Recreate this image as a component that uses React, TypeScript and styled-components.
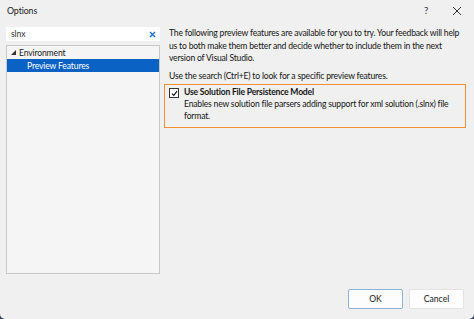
import React from "react";
import styled, { createGlobalStyle } from "styled-components";

const Global = createGlobalStyle`
  html, body { margin: 0; padding: 0; }
  body {
    width: 474px;
    height: 319px;
    overflow: hidden;
    background: #34405e;
    font-family: "Lato", "Noto Sans", sans-serif;
    color: #1a1a1a;
  }
`;

const Dialog = styled.div`
  width: 474px;
  height: 319px;
  display: flex;
  flex-direction: column;
  background: #f0f0f0;
  border-radius: 0 0 5px 5px;
  box-sizing: border-box;
`;

const TitleBar = styled.div`
  height: 21px;
  display: flex;
  align-items: center;
  padding: 0 0 0 7px;
  font-size: 8.8px;
  letter-spacing: -0.1px;
`;

const Title = styled.div`
  flex: 1;
  color: #202020;
`;

const TitleButton = styled.div<{ $w: number }>`
  width: ${(p) => p.$w}px;
  height: 21px;
  display: flex;
  align-items: center;
  justify-content: center;
  color: #333;
  font-size: 9.5px;
`;

const Body = styled.div`
  height: 253px;
  display: flex;
  padding: 6px 8px 0 6px;
  gap: 4px;
  box-sizing: border-box;
`;

const LeftPane = styled.div`
  width: 154px;
  display: flex;
  flex-direction: column;
  gap: 4px;
`;

const Search = styled.div`
  height: 14px;
  background: #fff;
  display: flex;
  align-items: center;
  padding: 0 4px 0 5px;
  font-size: 8.6px;
  letter-spacing: -0.1px;
  color: #333;
`;

const SearchText = styled.div`
  flex: 1;
`;

const Tree = styled.div`
  flex: 1;
  border: 1px solid #c8c8c8;
  background: #f5f5f5;
  font-size: 8.6px;
  letter-spacing: -0.15px;
`;

const TreeRow = styled.div<{ $selected?: boolean; $indent: number }>`
  height: 13px;
  display: flex;
  align-items: center;
  padding-left: ${(p) => p.$indent}px;
  background: ${(p) => (p.$selected ? "#0a62c4" : "transparent")};
  color: ${(p) => (p.$selected ? "#fff" : "#1a1a1a")};
  gap: 3px;
`;

const RightPane = styled.div`
  flex: 1;
  display: flex;
  flex-direction: column;
`;

const Para = styled.p<{ $gap: number }>`
  margin: 0 0 ${(p) => p.$gap}px 5px;
  font-size: 8.6px;
  line-height: 12.5px;
  letter-spacing: -0.2px;
  color: #141414;
`;

const Feature = styled.div`
  border: 1.5px solid #f0913a;
  padding: 1px 5px 5px 4px;
  display: flex;
  gap: 5px;
`;

const Check = styled.div`
  width: 8px;
  height: 8px;
  margin-top: 2px;
  border: 1px solid #333;
  background: #fff;
  display: flex;
  align-items: center;
  justify-content: center;
  flex-shrink: 0;
`;

const FeatureText = styled.div`
  font-size: 8.6px;
  line-height: 12px;
  letter-spacing: -0.2px;
  color: #141414;
`;

const FeatureTitle = styled.div`
  font-weight: 700;
`;

const Footer = styled.div`
  flex: 1;
  display: flex;
  justify-content: flex-end;
  align-items: flex-start;
  gap: 6px;
  padding: 15px 10px 0 0;
`;

const Button = styled.button<{ $default?: boolean }>`
  width: 55px;
  height: 20px;
  font-family: inherit;
  font-size: 8.6px;
  color: #1a1a1a;
  background: #fdfdfd;
  border: 1px solid ${(p) => (p.$default ? "#8db2d6" : "#e2e2e2")};
  border-radius: 2px;
  padding: 0;
`;

export default function App() {
  return (
    <>
      <Global />
      <Dialog>
        <TitleBar>
          <Title>Options</Title>
          <TitleButton $w={28}>?</TitleButton>
          <TitleButton $w={34}>
            <svg width="10" height="10" viewBox="0 0 10 10">
              <path d="M1 1 L9 9 M9 1 L1 9" stroke="#333" strokeWidth="1" />
            </svg>
          </TitleButton>
        </TitleBar>
        <Body>
          <LeftPane>
            <Search>
              <SearchText>slnx</SearchText>
              <svg width="7" height="7" viewBox="0 0 7 7">
                <path d="M1 1 L6 6 M6 1 L1 6" stroke="#1c6fc9" strokeWidth="1.4" />
              </svg>
            </Search>
            <Tree>
              <TreeRow $indent={4}>
                <svg width="5" height="5" viewBox="0 0 5 5">
                  <path d="M5 0 L5 5 L0 5 Z" fill="#333" />
                </svg>
                Environment
              </TreeRow>
              <TreeRow $indent={20} $selected>
                Preview Features
              </TreeRow>
            </Tree>
          </LeftPane>
          <RightPane>
            <Para $gap={5}>
              The following preview features are available for you to try. Your feedback will help us to both make
              them better and decide whether to include them in the next version of Visual Studio.
            </Para>
            <Para $gap={2}>Use the search (Ctrl+E) to look for a specific preview features.</Para>
            <Feature>
              <Check>
                <svg width="7" height="7" viewBox="0 0 7 7">
                  <path d="M1 3.6 L2.8 5.4 L6 1.2" stroke="#111" strokeWidth="1.1" fill="none" />
                </svg>
              </Check>
              <FeatureText>
                <FeatureTitle>Use Solution File Persistence Model</FeatureTitle>
                Enables new solution file parsers adding support for xml solution (.slnx) file format.
              </FeatureText>
            </Feature>
          </RightPane>
        </Body>
        <Footer>
          <Button $default>OK</Button>
          <Button>Cancel</Button>
        </Footer>
      </Dialog>
    </>
  );
}
